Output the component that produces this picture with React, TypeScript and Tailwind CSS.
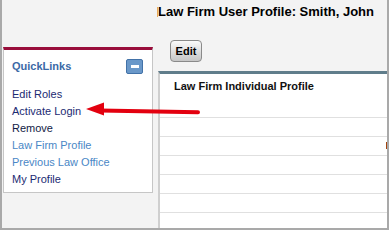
import React from 'react';

const links = [
  { label: 'Edit Roles', cls: 'text-[#1b2a72]' },
  { label: 'Activate Login', cls: 'text-[#1b2a72]' },
  { label: 'Remove', cls: 'text-[#111a45]' },
  { label: 'Law Firm Profile', cls: 'text-[#4a87c6]' },
  { label: 'Previous Law Office', cls: 'text-[#4a87c6]' },
  { label: 'My Profile', cls: 'text-[#1b2a72]' },
];

function QuickLinks() {
  return (
    <div className="ml-[1px] mt-[47px] w-[150px] h-[146px] bg-white border border-[#c6c6c6] border-t-[3px] border-t-[#990d3b]">
      <div className="flex items-center justify-between pl-[8px] pr-[9px] pt-[8px]">
        <span className="text-[11px] leading-[17px] font-bold text-[#3b69a6]">QuickLinks</span>
        <button className="w-[17px] h-[15px] rounded-[2px] bg-[#6a98c9] border border-[#4272a8] flex items-center justify-center">
          <span className="block w-[8px] h-[3px] bg-white" />
        </button>
      </div>
      <ul className="mt-[11px] pl-[8px]">
        {links.map(l => (
          <li key={l.label} className={`text-[11px] leading-[17px] ${l.cls}`}>{l.label}</li>
        ))}
      </ul>
    </div>
  );
}

function ProfilePanel() {
  return (
    <div className="relative mt-[9px] flex-1 bg-white border-t-[3px] border-t-[#607d8b] border-l-2 border-l-[#cfcfcf] overflow-hidden">
      <div className="h-[43px] pt-[5px] pl-[14px]">
        <h2 className="text-[11px] leading-[14px] font-bold text-[#111]">Law Firm Individual Profile</h2>
      </div>
      {[0, 1, 2, 3, 4, 5].map(i => (
        <div key={i} className="h-[19px] border-t border-[#e0e0e0]" />
      ))}
      {/* stray mark at right edge */}
      <span className="absolute right-0 top-[68px] w-[1px] h-[7px] bg-[#a3440f]" />
    </div>
  );
}

export default function App() {
  return (
    <div className="relative w-[389px] h-[230px] bg-[#f3f3f3] border-l-2 border-r-2 border-b-2 border-[#a9a9a9] flex overflow-hidden font-['Liberation_Sans',Arial,sans-serif]">
      <div className="w-[156px] shrink-0">
        <QuickLinks />
      </div>
      <div className="relative flex-1 flex flex-col">
        <span className="absolute -left-[1px] top-[7px] w-[1px] h-[10px] bg-[#e9a85a]" />
        <h1 className="pt-[4px] text-[13px] leading-[16px] font-bold text-black whitespace-nowrap">
          Law Firm User Profile: Smith, John
        </h1>
        <div className="flex mt-[20px] ml-[12px]">
          <button className="h-[22px] w-[32px] rounded-[4px] border border-[#8a8a8a] bg-gradient-to-b from-[#fafafa] to-[#c6c6c6] text-[11px] font-bold text-black leading-none">
            Edit
          </button>
        </div>
        <ProfilePanel />
      </div>
      {/* annotation arrow */}
      <svg className="absolute -left-[2px] top-0 pointer-events-none" width="389" height="230" viewBox="0 0 389 230">
        <line x1="100" y1="110.5" x2="198" y2="112.2" stroke="#e3000f" strokeWidth="4" strokeLinecap="round" />
        <polygon points="86,109 104,102.5 104,115.5" fill="#e3000f" />
      </svg>
    </div>
  );
}
